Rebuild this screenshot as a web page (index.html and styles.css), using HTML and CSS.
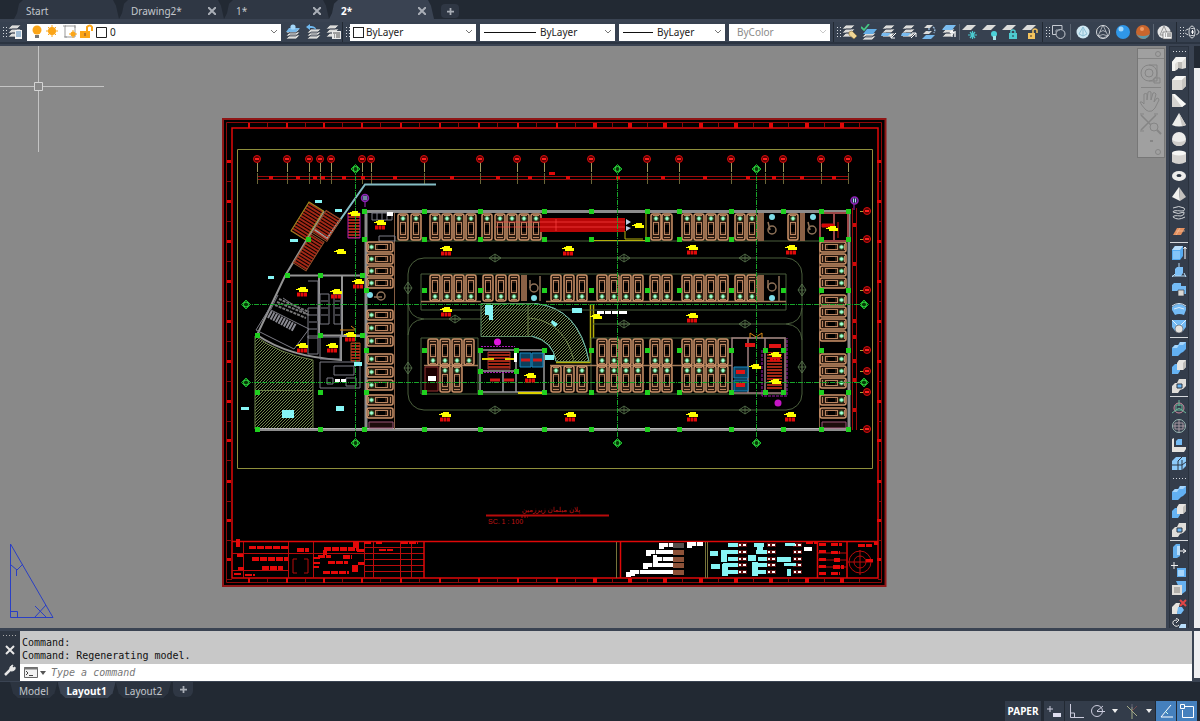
FILE: index.html
```
<!DOCTYPE html>
<html lang="en">

<head>
	<meta charset="utf-8">
	<meta name="viewport" content="width=device-width, initial-scale=1">
	<title>2* - Layout1</title>
	<link rel="stylesheet" href="styles.css">
</head>

<body>

	<!-- icon sprite -->
	<svg class="sprite" aria-hidden="true">
		<symbol id="i-sheets" viewBox="0 0 16 16">
			<path d="M5 1h9l-4 4H1zM5 5h9l-4 4H1zM5 9h9l-4 4H1z" fill="#dcdcda" stroke="#343d4b" stroke-width=".7"/>
		</symbol>
		<symbol id="i-props" viewBox="0 0 16 16">
			<use href="#i-sheets"/>
			<path d="M8 6h7v9H8z" fill="#f2f2f2"/><path d="M9 8h5M9 10h5M9 12h5" stroke="#4a83b5"/>
		</symbol>
		<symbol id="i-current" viewBox="0 0 16 16">
			<path d="M5 5h10l-4 4H1zM5 8h10l-4 4H1zM5 11h10l-4 4H1z" fill="#dcdcda" stroke="#343d4b" stroke-width=".7"/>
			<path d="M4 4h11l-4 4H1z" fill="#78b9ea"/><circle cx="8" cy="3" r="2.6" fill="#a5d8fa"/>
		</symbol>
		<symbol id="i-prev" viewBox="0 0 16 16">
			<path d="M6 5h10l-4 4H2zM6 8h10l-4 4H2zM6 11h10l-4 4H2z" fill="#dcdcda" stroke="#343d4b" stroke-width=".7"/>
			<path d="M1 3l4-3v2c4 0 6 1 6 4-2-2-3-2-6-2v2z" fill="#6fb9f0"/>
		</symbol>
		<symbol id="i-state" viewBox="0 0 16 16">
			<use href="#i-sheets"/>
			<path d="M7 7h9v8H7z" fill="#e9e9e9"/><path d="M8 9h7M9 11h1M11 11h4M9 13h1M11 13h4" stroke="#555"/>
		</symbol>
		<symbol id="i-match" viewBox="0 0 16 16">
			<use href="#i-sheets"/><path d="M8 8l3-1 5 5-3 3-5-4z" fill="#f0d695" stroke="#8a713a" stroke-width=".6"/>
		</symbol>
		<symbol id="i-check" viewBox="0 0 16 16">
			<path d="M5 9h10l-4 4H1zM5 12h10l-4 4H1z" fill="#dcdcda" stroke="#343d4b" stroke-width=".7"/>
			<path d="M6 5h10l-4 5H2z" fill="#64aee6"/><path d="M0 3l3 3 5-6" fill="none" stroke="#46c784" stroke-width="1.8"/>
		</symbol>
		<symbol id="i-copylay" viewBox="0 0 16 16">
			<use href="#i-sheets"/><path d="M1 9h9l-3 3H0z" fill="#79bcf0"/><path d="M15 9l-5 5m0-4v4h4" fill="none" stroke="#fff"/>
		</symbol>
		<symbol id="i-isolate" viewBox="0 0 16 16">
			<use href="#i-sheets"/><path d="M1 9h9l-3 3H0z" fill="#79bcf0"/><path d="M10 14l5-5m-4 0h4v4" fill="none" stroke="#fff"/>
		</symbol>
		<symbol id="i-walk" viewBox="0 0 16 16">
			<path d="M6 1h6l-3 3H3zM5 7h6l-3 3H2z" fill="#dcdcda"/><path d="M5 11h9l-4 4H1z" fill="#75b7eb"/>
			<path d="M12 3q3 2 1 6M8 4v4" fill="none" stroke="#9bd" stroke-width="1.4" stroke-dasharray="2 1"/>
		</symbol>
		<symbol id="i-merge" viewBox="0 0 16 16">
			<use href="#i-sheets"/><path d="M5 1h10l-4 5H1z" fill="#79bcf0"/><path d="M11 13V7m-2 2l2-2 2 2M14 7v6" fill="none" stroke="#fff" stroke-width="1.3"/>
		</symbol>
		<symbol id="i-freeze" viewBox="0 0 16 16">
			<path d="M5 1h9l-5 5H0z" fill="#dcdcda"/><path d="M6 11h9M8 8l5 6M13 8l-5 6M10.500 7v8" stroke="#4bc9cf" stroke-width="1.200"/>
		</symbol>
		<symbol id="i-off" viewBox="0 0 16 16">
			<path d="M5 1h9l-5 5H0z" fill="#dcdcda"/><circle cx="12" cy="10" r="3" fill="#4bd2d8"/><path d="M11 12h3v4h-3z" fill="#a8e4e6"/>
		</symbol>
		<symbol id="i-lock" viewBox="0 0 16 16">
			<path d="M5 1h9l-5 5H0z" fill="#dcdcda"/><path d="M7 9h8v6H7z" fill="#4ecad0"/><path d="M9 9V7q2-2 4 0v2" fill="none" stroke="#4ecad0" stroke-width="1.500"/><path d="M11 11v2" stroke="#234"/>
		</symbol>
		<symbol id="i-unlock" viewBox="0 0 16 16">
			<path d="M5 1h9l-5 5H0z" fill="#dcdcda"/><path d="M6 9h7v6H6z" fill="#f3c35e"/><path d="M11 9V6q2-2 4 0v3" fill="none" stroke="#f3c35e" stroke-width="1.500"/><path d="M9 11v2" stroke="#432"/>
		</symbol>
		<symbol id="i-wire2d" viewBox="0 0 16 16">
			<path d="M12 5V1.500H2.500v9H6" fill="none" stroke="#c6cbd2"/><circle cx="10.500" cy="10" r="4.500" fill="none" stroke="#c6cbd2"/><path d="M6 8V6h4" fill="none" stroke="#98a0ab"/>
		</symbol>
		<symbol id="i-hidden" viewBox="0 0 16 16">
			<circle cx="8" cy="8" r="6.500" fill="#cfe8f3"/><path d="M8 3l-4 7 4 2 4-2zM8 3v9" fill="none" stroke="#8cbed3"/>
		</symbol>
		<symbol id="i-wire" viewBox="0 0 16 16">
			<circle cx="8" cy="8" r="6.500" fill="none" stroke="#d5d8dc"/><path d="M8 1L3 12l5 2 5-2L8 1zM5 8q3-3 6 0M3 12q5-3 10 0" fill="none" stroke="#d5d8dc" stroke-width=".7"/>
		</symbol>
		<symbol id="i-blue" viewBox="0 0 16 16">
			<circle cx="8" cy="8" r="7" fill="#2f97e8"/><circle cx="6" cy="5" r="2.500" fill="#9fd6fb"/>
		</symbol>
		<symbol id="i-real" viewBox="0 0 16 16">
			<circle cx="8" cy="8" r="7" fill="#c9662d"/><path d="M1 9q2 5 7 6 5 0 7-6-1 3-7 3T1 9z" fill="#5d98a8"/><circle cx="7" cy="5" r="2" fill="#ef9a62"/>
		</symbol>
		<symbol id="i-vsman" viewBox="0 0 16 16">
			<circle cx="8" cy="8" r="6.500" fill="#e6e6e6"/><path d="M8 2L4 11h8z" fill="none" stroke="#999"/><path d="M7 8h9v7H7z" fill="#f5f5f5" stroke="#555" stroke-width=".6"/><path d="M9 10h1M11 10h4M9 12h1M11 12h4" stroke="#666"/>
		</symbol>
		<symbol id="i-orbit" viewBox="0 0 16 16">
			<ellipse cx="8" cy="8" rx="7" ry="3.500" fill="none" stroke="#d5d8dc" stroke-dasharray="4 2"/><ellipse cx="8" cy="8" rx="3" ry="6" fill="none" stroke="#d5d8dc"/><path d="M7 8h3M8.500 6v4" stroke="#fff"/>
		</symbol>

		<!-- solids -->
		<symbol id="s-poly" viewBox="0 0 16 16"><path d="M1 6l4-5h10v11l-4 1V6L7 7v6l-3 2H1z" fill="#dedcd8"/><path d="M7 6h4v7l-4-1z" fill="#bcbab6"/><path d="M1 6l4-5h10l-4 5-5 0-2 2v7H1z" fill="#f4f4f2"/></symbol>
		<symbol id="s-box" viewBox="0 0 16 16"><path d="M1 5l4-4h10v10l-4 4H1z" fill="#dcdad6"/><path d="M1 5l4-4h10l-4 4z" fill="#f7f7f5"/><path d="M11 5l4-4v10l-4 4z" fill="#c8c6c2"/></symbol>
		<symbol id="s-wedge" viewBox="0 0 16 16"><path d="M1 1v13h10l4-3z" fill="#d5d3d0"/><path d="M1 1l3 0 11 10-4 3z" fill="#f8f8f6"/></symbol>
		<symbol id="s-cone" viewBox="0 0 16 16"><path d="M8 1L1 13q7 3 14 0z" fill="#ededeb"/><path d="M8 1l3 13q3 0 4-1z" fill="#c9c7c4"/></symbol>
		<symbol id="s-sphere" viewBox="0 0 16 16"><circle cx="8" cy="8" r="7" fill="#ededeb"/><path d="M1 9q7 4 14 0-1 6-7 6T1 9z" fill="#cfcdca"/></symbol>
		<symbol id="s-cyl" viewBox="0 0 16 16"><path d="M1 4v9q7 4 14 0V4z" fill="#d5d3d0"/><ellipse cx="8" cy="4" rx="7" ry="2.500" fill="#f7f7f5"/></symbol>
		<symbol id="s-torus" viewBox="0 0 16 16"><ellipse cx="8" cy="8" rx="7" ry="5" fill="#ededeb"/><ellipse cx="8" cy="7.500" rx="2.500" ry="1.500" fill="#2c3542"/></symbol>
		<symbol id="s-pyr" viewBox="0 0 16 16"><path d="M8 1L1 11l8 4z" fill="#f2f2f0"/><path d="M8 1l1 14 6-4z" fill="#c3c1be"/></symbol>
		<symbol id="s-helix" viewBox="0 0 16 16"><path d="M2 3q6-3 11 0 2 3-3 3-8-1-8 1 5 3 11 0 1 3-3 4-8-1-8 1 5 4 12 0" fill="none" stroke="#d0d3d6"/></symbol>
		<symbol id="s-plane" viewBox="0 0 16 16"><path d="M6 5h8l-4 7H2z" fill="#e3905f"/><path d="M5 8h9M9 5l-4 7" stroke="#f6c09b" stroke-width=".7"/></symbol>
		<symbol id="s-bluebox" viewBox="0 0 16 16"><path d="M1 5l3-4h8v10l-3 4H1z" fill="#56aaf0"/><path d="M1 5l3-4h8L9 5z" fill="#b9defb"/><path d="M2 6h7v8H2z" fill="#84c4f8"/><path d="M14 14V2m-1.500 2L14 2l1.500 2" fill="none" stroke="#fff"/></symbol>
		<symbol id="s-press" viewBox="0 0 16 16"><path d="M4 6l2-2h6v6l-2 3H4z" fill="#7dc0f7"/><path d="M1 13h14M8 0v4M1 14l3-3M15 14l-2-4" stroke="#b7dcf7"/></symbol>
		<symbol id="s-pull" viewBox="0 0 16 16"><path d="M1 3l2-2h7v3h5v8H8V9H1z" fill="#74bbf5"/><path d="M7 8h6v6H7z" fill="#d9d7d3" stroke="#333d4b" stroke-width=".7"/></symbol>
		<symbol id="s-sweep" viewBox="0 0 16 16"><path d="M1 6q7-6 14 0v3l-2 5q-5-2-9 0L1 9z" fill="#74bbf5"/><path d="M1 5q7-5 14 0M3 8q5-3 10 0" fill="none" stroke="#d8ecfb"/></symbol>
		<symbol id="s-revolve" viewBox="0 0 16 16"><path d="M1 1h14v7l-3 4H4L1 8z" fill="#74bbf5"/><path d="M1 1l5 5M15 1l-5 5" stroke="#e1f1fd"/><circle cx="8" cy="10" r="4" fill="#e5e3df" stroke="#4a5360" stroke-width=".6"/></symbol>
		<symbol id="s-union" viewBox="0 0 16 16"><path d="M1 7l3-3h3l2-3h6v7l-3 3-2 1-3 3H1z" fill="#62b0f2"/><path d="M1 7l3-3h4l1-3h6l-3 3H8L6 7z" fill="#a5d5fb"/></symbol>
		<symbol id="s-subtract" viewBox="0 0 16 16"><path d="M1 8l3-3h5v7l-2 3H1z" fill="#66b3f3"/><path d="M6 4l2-3h7v7l-3 3H6z" fill="#e6e4e0"/><path d="M12 4l3-3v7l-3 3z" fill="#bfbdb9"/></symbol>
		<symbol id="s-intersect" viewBox="0 0 16 16"><path d="M1 8l3-3h2l2-4h7v7l-3 3-3 1-2 3H1z" fill="#dfddd9"/><path d="M6 6h5v4H6z" fill="#69b5f4" stroke="#2d3643"/></symbol>
		<symbol id="s-gizmo" viewBox="0 0 16 16"><circle cx="8" cy="9" r="5" fill="none" stroke="#cf8aa0"/><path d="M8 1v6M8 9l-7 5M8 9l7 5M5 6h6v5H5z" fill="none" stroke="#69b99b"/></symbol>
		<symbol id="s-globe" viewBox="0 0 16 16"><circle cx="8" cy="8" r="6.500" fill="none" stroke="#9db9b4"/><path d="M2 8h12M8 2v12M4 5h8v6H4z" fill="none" stroke="#a89aa3"/></symbol>
		<symbol id="s-angle" viewBox="0 0 16 16"><path d="M1 2l2-1v9h12v2l-2 3H1z" fill="#e5e3df"/><path d="M5 4l2-2h4v6H5z" fill="#74bbf5"/></symbol>
		<symbol id="s-slice" viewBox="0 0 16 16"><path d="M1 6l4-4h10v9l-4 4H1z" fill="#8ccaf9"/><path d="M7 15V6l4-4M1 10h10l4-3M11 5v10" fill="none" stroke="#2d3643"/></symbol>
		<symbol id="s-extface" viewBox="0 0 16 16"><path d="M2 4l3-3h4v12l-3 2H2z" fill="#65b0ef"/><path d="M6 3h3v9H6z" fill="#b9defb"/><path d="M9 8h5m-2-2l3 2-3 2" fill="none" stroke="#fff"/></symbol>
		<symbol id="s-moveface" viewBox="0 0 16 16"><path d="M6 6h9v9H6z" fill="#62b0f2"/><path d="M7 8h6v6H7z" fill="#a5d5fb"/><path d="M3 0v7M0 3.500h7" stroke="#eee"/></symbol>
		<symbol id="s-offface" viewBox="0 0 16 16"><path d="M5 1h10v10l-4 3" fill="#65b0ef"/><path d="M1 5h10v10H1z" fill="#dfddd9"/><path d="M3 7h6v6H3z" fill="#b0aeaa"/></symbol>
		<symbol id="s-delface" viewBox="0 0 16 16"><path d="M1 8l4-4h4l-3 11H1z" fill="#e6e4e0"/><path d="M7 8l4 0 2 3-3 4H6z" fill="#74bbf5"/><path d="M9 1l6 6M15 1L9 7" stroke="#e14646" stroke-width="2"/></symbol>
		<symbol id="s-rotface" viewBox="0 0 16 16"><path d="M6 2q-5 0-4 4 3 4 6 1M5 0l3 2-3 3" fill="none" stroke="#e8e8e8"/><path d="M8 9l2-3h5v8H8z" fill="#b9defb"/></symbol>
	</svg>

	<nav class="file-tabs">
		<a href="#" class="file-tab">Start</a>
		<a href="#" class="file-tab">Drawing2*<svg class="close" viewBox="0 0 8 8"><path d="M0 0l8 8M8 0L0 8"/></svg></a>
		<a href="#" class="file-tab">1*<svg class="close" viewBox="0 0 8 8"><path d="M0 0l8 8M8 0L0 8"/></svg></a>
		<a href="#" class="file-tab active">2*<svg class="close" viewBox="0 0 8 8"><path d="M0 0l8 8M8 0L0 8"/></svg></a>
		<button type="button" class="add-tab" aria-label="New drawing"><svg viewBox="0 0 8 8"><path d="M4 0v8M0 4h8"/></svg></button>
	</nav>

	<div class="toolbar">
		<div class="tool-group layers">
			<span class="grip"></span>
			<button type="button" class="tool" aria-label="Layer properties"><svg><use href="#i-props"/></svg></button>
			<div class="combo combo-layer">
				<svg class="layer-flags" viewBox="0 0 80 16">
					<circle cx="7" cy="6" r="4.500" fill="#fba518"/><path d="M5 11h4v3H5z" fill="#777"/>
					<circle cx="22" cy="7" r="4" fill="#fba518"/><path d="M22 1v12M16 7h12M18 3l8 8M26 3l-8 8" stroke="#fba518"/>
					<path d="M35 2h10v11H35zM33 2h3M45 1v3M34 13h3" fill="none" stroke="#999"/><circle cx="43" cy="10" r="2.500" fill="#fba518"/><path d="M43 6v8M39 10h8" stroke="#fba518"/>
					<path d="M50 7h10v7H50z" fill="#fba518"/><path d="M57 7V3q3-3 5 0v4" fill="none" stroke="#fba518" stroke-width="2"/><path d="M55 9v3" stroke="#743"/>
					<path d="M66.500 3.500h10v10h-10z" fill="#fff" stroke="#222"/>
				</svg>
				<select aria-label="Layer"><option>0</option></select>
				<svg class="chevron" viewBox="0 0 8 6"><path d="M1 1l3 3 3-3"/></svg>
			</div>
			<button type="button" class="tool" aria-label="Make current"><svg><use href="#i-current"/></svg></button>
			<button type="button" class="tool" aria-label="Layer previous"><svg><use href="#i-prev"/></svg></button>
			<button type="button" class="tool" aria-label="Layer states"><svg><use href="#i-state"/></svg></button>
		</div>
		<div class="tool-group properties">
			<span class="grip"></span>
			<div class="combo combo-color">
				<span class="swatch"></span>
				<select aria-label="Color"><option>ByLayer</option></select>
				<svg class="chevron" viewBox="0 0 8 6"><path d="M1 1l3 3 3-3"/></svg>
			</div>
			<div class="combo combo-linetype">
				<span class="line"></span>
				<select aria-label="Linetype"><option>ByLayer</option></select>
				<svg class="chevron" viewBox="0 0 8 6"><path d="M1 1l3 3 3-3"/></svg>
			</div>
			<div class="combo combo-weight">
				<span class="line"></span>
				<select aria-label="Lineweight"><option>ByLayer</option></select>
				<svg class="chevron" viewBox="0 0 8 6"><path d="M1 1l3 3 3-3"/></svg>
			</div>
			<div class="combo combo-plot">
				<select aria-label="Plot style" disabled><option>ByColor</option></select>
				<svg class="chevron" viewBox="0 0 8 6"><path d="M1 1l3 3 3-3"/></svg>
			</div>
		</div>
		<div class="tool-group">
			<span class="grip"></span>
			<button type="button" class="tool" aria-label="Layer match"><svg><use href="#i-match"/></svg></button>
			<button type="button" class="tool" aria-label="Change to current"><svg><use href="#i-check"/></svg></button>
			<button type="button" class="tool" aria-label="Copy to layer"><svg><use href="#i-copylay"/></svg></button>
			<button type="button" class="tool" aria-label="Isolate"><svg><use href="#i-isolate"/></svg></button>
			<button type="button" class="tool" aria-label="Layer walk"><svg><use href="#i-walk"/></svg></button>
			<button type="button" class="tool" aria-label="Merge"><svg><use href="#i-merge"/></svg></button>
			<span class="divider tight"></span>
			<button type="button" class="tool" aria-label="Freeze"><svg><use href="#i-freeze"/></svg></button>
			<button type="button" class="tool" aria-label="Off"><svg><use href="#i-off"/></svg></button>
			<button type="button" class="tool" aria-label="Lock"><svg><use href="#i-lock"/></svg></button>
			<button type="button" class="tool" aria-label="Unlock"><svg><use href="#i-unlock"/></svg></button>
		</div>
		<div class="tool-group">
			<span class="grip"></span>
			<button type="button" class="tool" aria-label="2D wireframe"><svg><use href="#i-wire2d"/></svg></button>
			<span class="divider"></span>
			<button type="button" class="tool" aria-label="Hidden"><svg><use href="#i-hidden"/></svg></button>
			<button type="button" class="tool" aria-label="Wireframe"><svg><use href="#i-wire"/></svg></button>
			<button type="button" class="tool" aria-label="Conceptual"><svg><use href="#i-blue"/></svg></button>
			<button type="button" class="tool" aria-label="Realistic"><svg><use href="#i-real"/></svg></button>
			<span class="divider tight"></span>
			<button type="button" class="tool" aria-label="Visual styles"><svg><use href="#i-vsman"/></svg></button>
		</div>
		<div class="tool-group">
			<span class="grip"></span>
			<button type="button" class="tool" aria-label="Orbit"><svg><use href="#i-orbit"/></svg></button>
		</div>
	</div>

	<main class="workspace">
		<div class="canvas">
			<svg class="crosshair" viewBox="0 0 104 106">
				<path d="M38.500 0v36M38.500 45v61M0 40.500h34M43 40.500h61" stroke="#c4c4c4"/>
				<path d="M34.500 36.500h8v8h-8z" fill="none" stroke="#d4d4d4"/>
			</svg>
			<svg class="sheet" id="sheet" viewBox="222 118 665 470">
				<defs>
					<pattern id="hatch" width="3" height="3" patternUnits="userSpaceOnUse">
						<path d="M-1 1l2-2M0 3l3-3M2 4l2-2" stroke="#7c9552" stroke-width=".9"/>
					</pattern>
					<pattern id="treads" width="3" height="3" patternUnits="userSpaceOnUse">
						<path d="M0 1h3" stroke="#d9341c" stroke-width="1.500"/>
					</pattern>
					<g id="car">
						<rect x="-5" y="-13" width="10" height="26" rx="2" fill="#2a1a10" stroke="#cb936a" stroke-width="1.500"/>
						<path d="M-3-4.500h6M-3 7.500h6M-3-11.500h6M-2.500-4v12M2.500-4v12M-3 10.500h6" fill="none" stroke="#b98460"/>
						<path d="M-2-2h4v7h-4z" fill="#000"/>
						<circle cy="-8.500" r="2" fill="#a8ffdc" stroke="#4c9a58"/>
					</g>
					<g id="bubble">
						<circle r="3.500" fill="#5c0000" stroke="#d80d0d"/><path d="M-2 0h4" stroke="#ff2020" stroke-width="2"/>
					</g>
					<g id="axis">
						<path d="M0-4.500L4.500 0 0 4.500-4.500 0z" fill="#053805" stroke="#19b82a"/><circle r="2.500" fill="none" stroke="#35e048"/>
					</g>
					<g id="flow">
						<path d="M-6 0L0-4 6 0 0 4zM0-4v8M-6 0H6" fill="none" stroke="#55704b" stroke-width=".9"/>
					</g>
					<g id="tag">
						<path d="M-6-1h2v-1h2v-1h6v2h2v3h-9v-2h-3z" fill="#ffff00"/>
					</g>
					<g id="tag-red">
						<use href="#tag"/><path d="M-5 4.500H5" stroke="#e30b0b" stroke-width="4" stroke-dasharray="3 .5"/>
					</g>
				</defs>

				<!-- paper and frame -->
				<rect x="223" y="119" width="662.500" height="467" fill="#000" stroke="#8f1717" stroke-width="2"/>
				<path d="M226.500 122.500h655v460h-655z" fill="none" stroke="#8d0808"/>
				<path d="M232 128h646v450H232zM232 541.500h646" fill="none" stroke="#e00808" stroke-width="1.500"/>
				<path d="M237.500 149.500h635v319h-635z" fill="none" stroke="#8f8f3c"/>
				<g id="frame-ticks"></g>

				<!-- grid -->
				<path d="M257 176.500h592M257 179.500h592M852.500 208v222M856.500 208v222" stroke="#9c0b0b"/>
				<g id="grid"></g>

				<!-- ground slab and ramps -->
				<path d="M255 336q25 18 58 24v69h-58z" fill="url(#hatch)" stroke="#6c8048"/>
				<path d="M255 390.500h58" stroke="#6c8048"/>
				<path d="M481 303.500h54q44 4 54 58h-33q-3-20-24-25h-51z" fill="url(#hatch)" stroke="#5d8a62"/>
				<path d="M528 304v32M528 318q36 2 46 43" fill="none" stroke="#6c8048"/>
				<path d="M535 303.500q44 4 54 58M532 336q21 5 24 25" fill="none" stroke="#6fb9ae"/>
				<path d="M590.500 304v59M556 362.500h34M593.500 304v34" stroke="#b5b00c" stroke-width="1.500" fill="none"/>

				<!-- driveway -->
				<g fill="none" stroke="#4b5f3d">
					<rect x="408" y="258" width="394" height="152" rx="16"/>
					<path d="M408 303q1 15 16 16h57M408 335q1-15 16-16M593 324h193q15-1 16-16M786 324q15 1 16 16"/>
					<path d="M421 274h365v36H421zM394 241h426M421 338h57v56h-57zM591 338h195v56H591zM478 394h113"/>
				</g>
				<path d="M421 301.500h60M546 301.500h240M424 365.500h54M550 365.500h182" stroke="#a47b59" stroke-width="1.500"/>

				<!-- outer walls -->
				<path d="M364 211.500h485v218H257M366 211v218" fill="none" stroke="#8c8c8c" stroke-width="3"/>
				<path d="M257 428.500h592" stroke="#b5b5b5"/>
				<path d="M324 211l-39 65-28 59q32 22 84 25v-24M285 275.500h80M319 276v60M342 276v60M319 335.500h45M341 336h24" fill="none" stroke="#949494" stroke-width="2"/>
				<path d="M394.500 213v216M819.500 213v216" stroke="#855d42"/>
				<path d="M436 184.500h-71l-38 54-14-10" fill="none" stroke="#84bcc4" stroke-width="2"/>

				<!-- stairs on the slanted side -->
				<g transform="translate(309 202) rotate(32)">
					<path d="M0 0h17v34H0z" fill="url(#treads)" stroke="#a08c20"/>
					<path d="M19-2h17v26H19z" fill="url(#treads)" stroke="#94502c"/>
					<path d="M19 26h15v34H19z" fill="url(#treads)" stroke="#94502c"/>
				</g>
				<path d="M348 213h12v25h-12z" fill="url(#treads)" stroke="#b01fb0"/>
				<path d="M351 343h9v18h-9z" fill="url(#treads)" stroke="#a04d20"/>

				<!-- plant rooms -->
				<g fill="none" stroke="#7d7d86">
					<path d="M269 309l40 20-15 20-38-19zM283 298l24 16M308 281h10v40M278 295l-7 14"/>
					<path d="M320 362h40v26h-40zM334 366h20v9h-20zM327 378h6v6h-6zM346 378h10v8h-10z"/>
					<path d="M308 308h10v30h-10zM320 294h9v30h-9zM334 294h7v30h-7zM308 336h10v18h-10zM320 337h20v22h-20zM309 315h8M309 322h8M309 329h8M321 301h7M321 308h7M321 315h7M335 301h5M335 308h5M335 315h5"/>
					<path d="M372 213h20v7h-20zM377 213v7M382 213v7M387 213v7M379 236h16v5h-16z"/>
				</g>
				<path d="M277 302l32 13M275 305l31 13M279 299l30 13" stroke="#777" stroke-width="2" stroke-dasharray="3 1"/>
				<path d="M269 314l26 14" stroke="#8b8b93" stroke-width="8" stroke-dasharray="2 1"/>

				<g id="cars"></g>

				<!-- red ramp -->
				<path d="M540 218h85v14h-85z" fill="#b90707"/>
				<path d="M496 222h129M496 227h129M556 219v12" stroke="#ff4545" stroke-width=".7"/>
				<path d="M625 231v8h18M594 240.500h52v-28" fill="none" stroke="#b5b00c"/>
				<path d="M626 219l5 3-5 3zM626 226l5 2-5 3z" fill="#bcd"/>

				<!-- accessible bays -->
				<g fill="#8b6146">
					<path d="M758 213h6v28h-6zM800 213h5v28h-5zM758 275h6v26h-6zM521 275h6v26h-6z"/>
				</g>
				<g fill="none" stroke="#8f7258" stroke-width="1.500">
					<circle cx="772" cy="230" r="4"/><circle cx="812" cy="230" r="4"/><circle cx="772" cy="287" r="4"/><circle cx="534" cy="288" r="4"/><circle cx="381" cy="296" r="4"/>
					<path d="M768 222l2 8M808 222l2 8M768 280v8M530 280v8M374 297h8M540 276v25M779 276v25"/>
				</g>
				<g fill="#7edce8">
					<circle cx="772" cy="217" r="3"/><circle cx="813" cy="217" r="3"/><circle cx="772" cy="298" r="3"/><circle cx="534" cy="298" r="3"/><circle cx="370" cy="295" r="3"/>
				</g>

				<!-- cores -->
				<path d="M480 350h64v42h-64zM480 371h38M503 371v21M516 350v42M480 348v44" fill="none" stroke="#9a9a9a" stroke-width="1.500"/>
				<path d="M488 352h22v17h-22z" fill="url(#treads)" stroke="#933"/>
				<path d="M520 353h11v14h-11zM532 353h11v14h-11z" fill="#0b405d" stroke="#1a8ac4"/>
				<path d="M521 360h9M533 360h9M490 380h10M504 380h10" stroke="#d11a1a" stroke-width="3"/>
				<path d="M482 359h12M505 359h10M518 393h26" stroke="#ddd000" stroke-width="2"/>
				<path d="M481 346.500h34M481 372.500h38" stroke="#a31cb0" stroke-dasharray="2 1"/>
				<path d="M514 352h3v10h-3z" fill="#fff"/>
				<path d="M425 367h13v24h-13z" fill="#1b0000" stroke="#963232"/><path d="M428 376h8v5h-8z" fill="#fff"/>
				<path d="M732 338h53v55h-53zM748 338v55M765 338v55" fill="none" stroke="#a08080" stroke-width="1.500"/>
				<path d="M734 367h14v11h-14zM734 380h14v11h-14z" fill="#0b405d" stroke="#1a8ac4"/>
				<path d="M736 372h9M736 385h9M745 345h10M769 346h12" stroke="#e01414" stroke-width="4"/>
				<path d="M767 352h15v38h-15z" fill="url(#treads)"/>
				<path d="M762 350v46h25v-58" fill="none" stroke="#a31cb0" stroke-dasharray="3 1"/>
				<path d="M750 338v-5l6 4 6-4v5M340 330h16l-5-4" fill="none" stroke="#d98a18"/>
				<path d="M820 213h28v28h-28zM834 213v28" fill="none" stroke="#9a4747" stroke-width="2"/>
				<path d="M822 224h12v3h-12zM838 222v16" fill="#d00" stroke="#c11"/>
				<path d="M369 422h24v6h-24zM822 422h24v6h-24z" fill="#1c0c0c" stroke="#957"/>

				<g id="columns"></g>

				<g stroke="#17a52a" stroke-dasharray="5 1 1 1">
					<path d="M355.500 168v275M617.500 168v275M756.500 168v275M246 304.500h618M246 382.500h618"/>
				</g>
				<g id="labels"></g>

				<path d="M365 202v5M854 204v6" stroke="#a226c0"/>
				<circle cx="365" cy="198" r="3.500" fill="#234" stroke="#8f22b8" stroke-width="1.500"/>
				<circle cx="854.500" cy="200.500" r="3.500" fill="#234" stroke="#8f22b8" stroke-width="1.500"/>
				<path d="M364 196v4M366 196v4M853.500 198.500v4M855.500 198.500v4" stroke="#bcd9ff"/>
				<circle cx="497.500" cy="342" r="3.500" fill="#e015e0"/><circle cx="778" cy="403" r="3.500" fill="#c515c5"/>
				<path d="M485 305h8v15h-4v-5h-4zM282 410h12v8h-12zM572 308h10v5h-10zM545 355h9v5h-9zM315 200h7v3h-7zM335 209h7v3h-7zM290 239h8v3h-8zM268 276h6v3h-6zM354 362h8v4h-8zM336 406h8v5h-8zM241 407h8v3h-8zM552 320l6 4-3 3-4-4z" fill="#86f5f5"/>
				<path d="M597 311h7v3h-7zM605 311h6v3h-6zM612 311h6v3h-6zM619 311h8v3h-8zM335 379h5v3h-5zM341 379h5v3h-5zM387 212h6v4h-6z" fill="#fff"/>

				<!-- drawing title -->
				<text class="cad-text" x="551" y="512" text-anchor="middle">پلان مبلمان زیرزمین</text>
				<path d="M486 515.500h123" stroke="#b80b0b" stroke-width="2"/>
				<text class="cad-text" x="488" y="524">SC. 1 : 100</text>
				<path d="M521 517h7" stroke="#b80b0b" stroke-dasharray="2 1"/>

				<!-- title block -->
				<g fill="none" stroke="#b90b0b">
					<path d="M243.500 542v36M288.500 542v36M313.500 542v36M364.500 542v36M373.500 542v36M400.500 542v36M411.500 542v36M232 553.500h132M232 570.500h56M364 547.500h60M364 553.500h60M364 559.500h60M364 565.500h60M364 571.500h60"/>
					<path d="M424 542v36M620.500 542v36M817.500 542v36M847 542v36" stroke="#e00808" stroke-width="1.500"/>
					<path d="M297 559h-4v14h4M304 559h4v14h-4"/>
					<circle cx="860" cy="562" r="11"/><circle cx="860" cy="562" r="6"/><path d="M848 562h25M860 550v25M817 553h30M817 560h30M817 567h30"/>
				</g>
				<path d="M616.500 542v36M705.500 542v36M707.500 542v36" stroke="#77733a"/>
				<g id="title-block"></g>
			</svg>

			<svg class="ucs" viewBox="0 0 44 76" fill="none" stroke="#2a3fc4">
				<path d="M.5 1v73.500H43zM.5 68.500h7v6M1 22l6 5 6-6M6.500 27v6M25 63l11 11M25 74l11-12"/>
			</svg>

			<div class="navbar">
				<svg viewBox="0 0 26 108" fill="none" stroke="#858585">
					<circle cx="20" cy="5" r="2.500"/><path d="M0 9.500h26"/>
					<circle cx="11" cy="24" r="8"/><circle cx="11" cy="24" r="4"/><path d="M11 16h8v16h-8M16 29h6v5h-6z"/>
					<path d="M3 38.500h20"/>
					<path d="M8 61c-3-3-5-6-6-8q2-1 4 2V45q2-1 3 0v6l1-8q2-1 3 0v8l2-7q2-1 3 1l-2 8 3-4q2 0 2 2l-4 8-3 3q-4 1-6-1z"/>
					<path d="M3 66l15 15M18 66L3 81" stroke-width="1.500"/><path d="M2 65h4M16 65h4M2 82h4"/><circle cx="16" cy="78" r="4" fill="#a0a0a0"/><path d="M19 81l4 4" stroke-width="2"/>
					<path d="M12 92h3" stroke-width="2"/><circle cx="20" cy="103" r="2.500"/>
				</svg>
			</div>
		</div>

		<div class="solids">
			<div class="solids-list">
				<span class="grip-h"></span>
				<button type="button" class="solid" aria-label="Polysolid"><svg><use href="#s-poly"/></svg></button>
				<button type="button" class="solid" aria-label="Box"><svg><use href="#s-box"/></svg></button>
				<button type="button" class="solid" aria-label="Wedge"><svg><use href="#s-wedge"/></svg></button>
				<button type="button" class="solid" aria-label="Cone"><svg><use href="#s-cone"/></svg></button>
				<button type="button" class="solid" aria-label="Sphere"><svg><use href="#s-sphere"/></svg></button>
				<button type="button" class="solid" aria-label="Cylinder"><svg><use href="#s-cyl"/></svg></button>
				<button type="button" class="solid" aria-label="Torus"><svg><use href="#s-torus"/></svg></button>
				<button type="button" class="solid" aria-label="Pyramid"><svg><use href="#s-pyr"/></svg></button>
				<button type="button" class="solid" aria-label="Helix"><svg><use href="#s-helix"/></svg></button>
				<button type="button" class="solid" aria-label="Planar surface"><svg><use href="#s-plane"/></svg></button>
				<span class="rule"></span>
				<button type="button" class="solid" aria-label="Extrude"><svg><use href="#s-bluebox"/></svg></button>
				<button type="button" class="solid" aria-label="Presspull"><svg><use href="#s-press"/></svg></button>
				<button type="button" class="solid" aria-label="Sweep"><svg><use href="#s-pull"/></svg></button>
				<button type="button" class="solid" aria-label="Revolve"><svg><use href="#s-sweep"/></svg></button>
				<button type="button" class="solid" aria-label="Loft"><svg><use href="#s-revolve"/></svg></button>
				<span class="rule"></span>
				<button type="button" class="solid" aria-label="Union"><svg><use href="#s-union"/></svg></button>
				<button type="button" class="solid" aria-label="Subtract"><svg><use href="#s-subtract"/></svg></button>
				<button type="button" class="solid" aria-label="Intersect"><svg><use href="#s-intersect"/></svg></button>
				<span class="rule"></span>
				<button type="button" class="solid" aria-label="3D move"><svg><use href="#s-gizmo"/></svg></button>
				<button type="button" class="solid" aria-label="3D rotate"><svg><use href="#s-globe"/></svg></button>
				<button type="button" class="solid" aria-label="3D align"><svg><use href="#s-angle"/></svg></button>
				<button type="button" class="solid" aria-label="3D array"><svg><use href="#s-slice"/></svg></button>
				<span class="grip-h second"></span>
				<button type="button" class="solid" aria-label="Union"><svg><use href="#s-union"/></svg></button>
				<button type="button" class="solid" aria-label="Subtract"><svg><use href="#s-subtract"/></svg></button>
				<button type="button" class="solid" aria-label="Intersect"><svg><use href="#s-intersect"/></svg></button>
				<span class="rule"></span>
				<button type="button" class="solid" aria-label="Extrude faces"><svg><use href="#s-extface"/></svg></button>
				<button type="button" class="solid" aria-label="Move faces"><svg><use href="#s-moveface"/></svg></button>
				<button type="button" class="solid" aria-label="Offset faces"><svg><use href="#s-offface"/></svg></button>
				<button type="button" class="solid" aria-label="Delete faces"><svg><use href="#s-delface"/></svg></button>
				<button type="button" class="solid" aria-label="Rotate faces"><svg><use href="#s-rotface"/></svg></button>
			</div>
		</div>
		<div class="edge"></div>
	</main>

	<section class="command">
		<div class="command-side">
			<span class="dots"></span>
			<button type="button" aria-label="Close"><svg viewBox="0 0 12 12"><path d="M2 2l8 8M10 2l-8 8" stroke="#e8e8e8" stroke-width="2"/></svg></button>
			<button type="button" aria-label="Customize"><svg viewBox="0 0 12 12"><path d="M1 11l6-6" stroke="#e8e8e8" stroke-width="2.500"/><path d="M6 6q-1-4 3-5L8 3l1 1 2-1q1 4-4 4z" fill="#e8e8e8" stroke="#e8e8e8"/></svg></button>
		</div>
		<div class="command-body">
			<div class="history">
				<p>Command:</p>
				<p>Command: Regenerating model.</p>
			</div>
			<label class="prompt">
				<svg class="prompt-icon" viewBox="0 0 14 11"><path d="M.5.5h13v10H.5z" fill="#f1f1f1" stroke="#666"/><path d="M0 1.500h14" stroke="#777" stroke-width="2"/><path d="M2 4l2 2-2 2M5 8.500h4" fill="none" stroke="#444"/></svg>
				<svg class="prompt-caret" viewBox="0 0 6 4"><path d="M0 0h6L3 4z" fill="#555"/></svg>
				<input type="text" placeholder="Type a command" aria-label="Command">
			</label>
		</div>
		<div class="command-end"></div>
	</section>

	<nav class="layout-tabs">
		<a href="#" class="layout-tab">Model</a>
		<a href="#" class="layout-tab active">Layout1</a>
		<a href="#" class="layout-tab">Layout2</a>
		<button type="button" class="add-layout" aria-label="New layout"><svg viewBox="0 0 8 8"><path d="M4 0v8M0 4h8"/></svg></button>
	</nav>

	<footer class="status">
		<button type="button" class="space">PAPER</button>
		<button type="button" aria-label="Grid input"><svg viewBox="0 0 16 16"><path d="M4 3v6M1 6h6" stroke="#ccd"/><path d="M7 10h8v4H7z" fill="#dde"/></svg></button>
		<div class="status-group">
			<button type="button" aria-label="Ortho"><svg viewBox="0 0 16 16"><path d="M2.500 1v13.500H16M6.500 14v-4H2" fill="none" stroke="#ccd"/></svg></button>
			<button type="button" aria-label="Polar"><svg viewBox="0 0 16 16"><circle cx="7" cy="8" r="5.500" fill="none" stroke="#ccd"/><path d="M7 8.500h8M7 8l6-5" stroke="#ccd"/></svg></button>
			<button type="button" class="caret" aria-label="Polar options"><svg viewBox="0 0 6 4"><path d="M0 0h6L3 4z" fill="#eee"/></svg></button>
			<button type="button" aria-label="Isodraft"><svg viewBox="0 0 16 16"><path d="M3 3l10 10M8 4v12" stroke="#a5ac88"/><path d="M8 8l5-5" stroke="#754a4f"/><path d="M8 1v5" stroke="#667"/></svg></button>
			<button type="button" class="caret" aria-label="Isodraft options"><svg viewBox="0 0 6 4"><path d="M0 0h6L3 4z" fill="#eee"/></svg></button>
		</div>
		<button type="button" class="on" aria-label="Snap tracking"><svg viewBox="0 0 16 16"><path d="M13 2L3 14h12" fill="none" stroke="#fff"/><path d="M7 8l3 3" stroke="#cfe"/></svg></button>
		<button type="button" class="on" aria-label="Object snap"><svg viewBox="0 0 16 16"><path d="M6 3.500h8.500v11h-11V7" fill="none" stroke="#fff"/><path d="M1.500 1.500h4v4h-4z" fill="none" stroke="#fff"/></svg></button>
	</footer>

	<script src="plan.js"></script>

</body>
</html>
```
FILE: styles.css
```
* {
	box-sizing: border-box;
}

html,
body {
	height: 100%;
}

body {
	display: flex;
	flex-direction: column;
	margin: 0;
	overflow: hidden;
	background: #222933;
	color: #c3c7cd;
	font-family: "Noto Sans", "Open Sans", sans-serif;
	font-size: 11px;
}

button {
	margin: 0;
	padding: 0;
	border: 0;
	background: none;
	color: inherit;
	font: inherit;
}

a {
	color: inherit;
	text-decoration: none;
}

svg {
	display: block;
	flex: none;
}

.sprite {
	position: absolute;
	width: 0;
	height: 0;
}

/* file tabs */

.file-tabs {
	display: flex;
	flex: none;
	height: 22px;
	padding-left: 14px;
	border-bottom: 3px solid #3a4352;
}

.file-tab {
	display: flex;
	align-items: center;
	justify-content: space-between;
	width: 105px;
	height: 19px;
	padding: 3px 8px 0 12px;
	background: #2f3744;
	font-size: 10px;
	clip-path: polygon(0 100%, 3px 70%, 5px 20%, 9px 0, calc(100% - 6px) 0, calc(100% - 3px) 30%, 100% 100%);
}

.file-tab.active {
	background: #3a4352;
	color: #fff;
	font-weight: bold;
}

.close {
	width: 8px;
	height: 8px;
}

.close path,
.add-tab path,
.add-layout path {
	fill: none;
	stroke: #a9aeb6;
	stroke-width: 2;
}

.add-tab {
	display: flex;
	align-items: center;
	justify-content: center;
	width: 18px;
	height: 14px;
	margin: 4px 0 0 7px;
	border-radius: 4px;
	background: #2f3744;
}

.add-tab svg,
.add-layout svg {
	width: 7px;
	height: 7px;
}

/* toolbar */

.toolbar {
	display: flex;
	flex: none;
	height: 24px;
	padding-bottom: 2px;
	border-bottom: 2px solid #3a4352;
	background: #2b3441;
	overflow: hidden;
}

.tool-group {
	display: flex;
	flex: none;
	align-items: center;
	gap: 4px;
	padding: 0 4px 0 2px;
	border-right: 1px solid #222933;
	background: #374150;
}

.tool-group.layers {
	padding-right: 1px;
}

.grip {
	width: 5px;
	height: 12px;
	margin-right: -4px;
	background: radial-gradient(circle, #d5d9de 1px, transparent 1px) 0 0 / 3px 3px;
}

.tool {
	width: 16px;
	height: 16px;
}

.tool svg {
	width: 16px;
	height: 16px;
}

.divider {
	width: 1px;
	height: 16px;
	background: #5a6472;
}

.divider.tight {
	margin: 0 -2px;
}

.tool-group.properties {
	padding-right: 3px;
}

.combo {
	display: flex;
	align-items: center;
	height: 17px;
	padding: 0 3px;
	background: #fff;
	color: #222;
}

.combo select {
	flex: 1;
	min-width: 0;
	padding: 0;
	border: 0;
	background: none;
	color: inherit;
	font: inherit;
	font-size: 10px;
	appearance: none;
}

.combo-layer {
	width: 254px;
}

.layer-flags {
	width: 80px;
	height: 16px;
}

.combo-color {
	width: 126px;
}

.combo-linetype {
	width: 135px;
}

.combo-weight {
	width: 106px;
}

.combo-plot {
	width: 101px;
	padding-left: 8px;
	color: #8b8b8b;
}

.combo-plot select:disabled {
	opacity: 1;
}

.swatch {
	width: 11px;
	height: 11px;
	margin-right: 2px;
	border: 1px solid #222;
}

.line {
	width: 52px;
	height: 1px;
	margin: 0 4px 0 1px;
	background: #111;
}

.combo-weight .line {
	width: 30px;
}

.chevron {
	width: 8px;
	height: 6px;
}

.chevron path {
	fill: none;
	stroke: #777;
}

.combo-plot .chevron {
	opacity: .4;
}

/* drawing area */

.workspace {
	display: flex;
	flex: 1;
	min-height: 0;
}

.canvas {
	position: relative;
	flex: 1;
	overflow: hidden;
	background: #898989;
}

.crosshair {
	position: absolute;
	top: 0;
	left: 0;
	width: 104px;
	height: 106px;
}

.sheet {
	position: absolute;
	top: 72px;
	left: 222px;
	width: 665px;
	height: 470px;
}

.ucs {
	position: absolute;
	bottom: 9px;
	left: 10px;
	width: 44px;
	height: 76px;
}

.navbar {
	position: absolute;
	top: 2px;
	right: 1px;
	width: 28px;
	border: 1px solid #777;
	background: #a0a0a0;
}

.cad-text {
	fill: #c01414;
	font-family: "Liberation Sans", "DejaVu Sans", sans-serif;
	font-size: 7px;
}

/* solids toolbar */

.solids {
	flex: none;
	width: 28px;
	padding: 0 5px 0 2px;
	border-left: 1px solid #3a4352;
	background: #3a4352;
	overflow: hidden;
}

.solids-list {
	display: flex;
	flex-direction: column;
	align-items: center;
	height: calc(100% + 8px);
	border: 1px solid #2a323e;
	background: #343d4b;
}

.solid {
	display: flex;
	flex: 1;
	align-items: center;
	min-height: 0;
}

.solid svg {
	width: 16px;
	height: 16px;
}

.rule {
	width: 18px;
	height: 1px;
	margin: 1px 0;
	background: #d5d8dc;
}

.grip-h {
	width: 14px;
	height: 4px;
	margin: 3px 0 1px;
	background: radial-gradient(circle, #d5d9de 1px, transparent 1px) 0 0 / 3px 3px;
}

.grip-h.second {
	margin: 5px 0 2px;
}

.edge {
	flex: none;
	width: 6px;
	margin-top: 22px;
	background: #efeff1;
}

/* command line */

.command {
	display: flex;
	flex: none;
	height: 54px;
	border-top: 3px solid #3a4352;
	border-bottom: 1px solid #3a4352;
}

.command-side {
	display: flex;
	flex-direction: column;
	align-items: center;
	gap: 8px;
	width: 20px;
	padding-top: 4px;
	background: #2e3642;
}

.command-side svg {
	width: 12px;
	height: 12px;
}

.dots {
	width: 15px;
	height: 1px;
	background: repeating-linear-gradient(90deg, #aaa 0 1px, transparent 1px 3px);
}

.command-body {
	flex: 1;
	background: #fff;
	color: #111;
	font-family: "DejaVu Sans Mono", monospace;
	font-size: 10px;
}

.history {
	height: 33px;
	padding: 5px 2px 0;
	background: #c8c8c8;
}

.history p {
	margin: 0;
	line-height: 13px;
}

.prompt {
	display: flex;
	align-items: center;
	height: 17px;
	padding-left: 4px;
}

.prompt-icon {
	width: 14px;
	height: 11px;
	margin-right: 2px;
}

.prompt-caret {
	width: 6px;
	height: 4px;
	margin-right: 5px;
}

.prompt input {
	flex: 1;
	padding: 0;
	border: 0;
	outline: 0;
	font: inherit;
}

.prompt input::placeholder {
	color: #777;
	font-style: italic;
}

.command-end {
	width: 8px;
	border-left: 2px solid #3a4352;
	border-bottom: 3px solid #3a4352;
	background: #efeff1;
}

/* layout tabs */

.layout-tabs {
	display: flex;
	flex: none;
	height: 18px;
	padding-left: 10px;
}

.layout-tab {
	height: 16px;
	padding: 0 9px;
	background: #2c3440;
	font-size: 10px;
	line-height: 18px;
	clip-path: polygon(0 0, 100% 0, calc(100% - 3px) 70%, calc(100% - 8px) 100%, 8px 100%, 3px 70%);
}

.layout-tab.active {
	background: #3a4352;
	color: #fff;
	font-weight: bold;
}

.add-layout {
	display: flex;
	align-items: center;
	justify-content: center;
	width: 20px;
	height: 15px;
	margin-left: 2px;
	border-radius: 0 0 6px 6px;
	background: #2f3744;
}

/* status bar */

.status {
	display: flex;
	flex: none;
	justify-content: flex-end;
	gap: 1px;
	height: 21px;
	padding: 1px 3px 0 0;
}

.status button {
	display: flex;
	align-items: center;
	justify-content: center;
	width: 20px;
	height: 20px;
	background: #333c4a;
}

.status .space {
	width: 36px;
	margin-right: 2px;
	color: #fff;
	font-size: 10px;
	font-weight: bold;
}

.status svg {
	width: 16px;
	height: 16px;
}

.status-group {
	display: flex;
}

.status-group button {
	width: 22px;
}

.status .caret {
	width: 12px;
}

.status .caret svg {
	width: 6px;
	height: 4px;
}

.status .on {
	background: #4580bd;
}
```
FILE: plan.js
```
var NS = "http://www.w3.org/2000/svg";

function add(parent, name, attrs) {
	var el = document.createElementNS(NS, name);
	for (var key in attrs) {
		el.setAttribute(key, attrs[key]);
	}
	document.getElementById(parent).appendChild(el);
}

function stamp(parent, id, x, y, angle) {
	add(parent, "use", {
		href: "#" + id,
		transform: "translate(" + x + " " + y + ")" + (angle ? " rotate(" + angle + ")" : "")
	});
}

function box(parent, x, y, w, h, fill) {
	add(parent, "rect", { x: x, y: y, width: w, height: h, fill: fill });
}

// sheet frame
[249, 287, 324, 362, 401, 440, 479, 518, 557, 594, 629, 664, 700, 735, 770, 806, 841].forEach(function (x) {
	box("frame-ticks", x - 1, 123, x > 560 ? 4 : 2, 5, "#e00808");
	box("frame-ticks", x - 1, 578, x > 560 ? 4 : 2, 5, "#e00808");
	box("frame-ticks", x + 18, 123, 1, 4, "#8d0808");
	box("frame-ticks", x + 18, 579, 1, 4, "#8d0808");
});
[161, 201, 241, 281, 321, 361, 401, 440, 481, 520, 559].forEach(function (y) {
	box("frame-ticks", 227, y - 1, 4, 3, "#e00808");
	box("frame-ticks", 877, y - 1, 4, 3, "#e00808");
	box("frame-ticks", 227, y + 20, 5, 1, "#8d0808");
	box("frame-ticks", 878, y + 20, 4, 1, "#8d0808");
});

// grid bubbles
[257, 287, 309, 320, 331, 362, 371, 424, 480, 517, 544, 591, 647, 679, 731, 765, 783, 821, 848].forEach(function (x) {
	box("grid", x, 163, 1, 9, "#a09a5c");
	box("grid", x, 173, 1, 11, "#6b6638");
	stamp("grid", "bubble", x, 159);
});
[211, 239, 290, 350, 371, 392, 429].forEach(function (y) {
	box("grid", 860, y, 4, 1, "#b09a30");
	stamp("grid", "bubble", 867, y);
});
[271, 298, 315, 323, 344, 363, 395, 452, 498, 530, 568, 618, 663, 705, 748, 774, 802, 834].forEach(function (x) {
	box("grid", x - 2, 176, 4, 3, "#e00808");
});
box("grid", 549, 172, 6, 3, "#e00808");
[225, 264, 321, 337, 361, 380, 410].forEach(function (y) {
	box("grid", 853, y - 2, 3, 4, "#d00808");
});

// parking bays
var fours = [602, 614, 626, 638, 655, 667, 687, 699, 711, 723];
[403, 416, 435, 447, 459, 471, 487, 500, 512, 524, 536, 656, 667, 687, 699, 711, 723, 740, 752, 793].forEach(function (x) {
	stamp("cars", "car", x, 227);
});
[435, 447, 459, 471, 488, 501, 514, 556, 569, 582, 740, 752].concat(fours).forEach(function (x) {
	stamp("cars", "car", x, 288, 180);
});
[433, 445, 457, 469].concat(fours).forEach(function (x) {
	stamp("cars", "car", x, 352, 180);
});
[445, 457, 556, 569, 582].concat(fours).forEach(function (x) {
	stamp("cars", "car", x, 379);
});
[247, 259, 271, 283, 315, 328, 341, 359, 372, 385, 400, 413].forEach(function (y) {
	stamp("cars", "car", 380, y, -90);
});
[247, 259, 271, 283, 300, 312, 324, 336, 359, 371, 383, 400, 413].forEach(function (y) {
	stamp("cars", "car", 833, y, 90);
});

// structural columns
function column(x, y) {
	box("columns", x - 2, y - 2, 5, 5, "#1fd01f");
}
[211, 239, 429].forEach(function (y) {
	[364, 424, 480, 544, 591, 647, 679, 731, 783, 821, 848].forEach(function (x) {
		if (!(y === 239 && x === 783)) {
			column(x, y);
		}
	});
});
[290, 350, 392].forEach(function (y) {
	[366, 424, 480, 544, 591, 647, 679, 731, 783, 821, 848].forEach(function (x) {
		column(x, y);
	});
});
[[287, 275], [320, 275], [362, 275], [308, 239], [257, 335], [320, 335], [362, 335], [320, 392], [257, 392],
	[257, 429], [320, 429], [480, 371], [516, 350], [516, 371], [765, 350], [765, 392]].forEach(function (p) {
	column(p[0], p[1]);
});

// axis heads and flow markers
[355.5, 617.5, 756.5].forEach(function (x) {
	stamp("labels", "axis", x, 169);
	stamp("labels", "axis", x, 443);
});
[304.5, 382.5].forEach(function (y) {
	stamp("labels", "axis", 246, y);
	stamp("labels", "axis", 864, y);
});
[[495, 258], [624, 258], [745, 258], [455, 319], [624, 324], [745, 324], [495, 410], [624, 410], [745, 410]].forEach(function (p) {
	stamp("labels", "flow", p[0], p[1]);
});
[[408, 288], [802, 290], [408, 368], [802, 367]].forEach(function (p) {
	stamp("labels", "flow", p[0], p[1], 90);
});

// room tags
[[446, 249], [568, 249], [692, 248], [791, 248], [380, 223], [446, 310], [692, 316], [302, 290], [336, 292], [358, 282],
	[350, 335], [302, 346], [332, 346], [445, 415], [570, 415], [692, 415], [790, 415], [530, 376], [775, 355]].forEach(function (p) {
	stamp("labels", "tag-red", p[0], p[1]);
});
[[340, 252], [638, 226], [755, 367], [832, 229], [596, 317], [354, 214], [775, 382]].forEach(function (p) {
	stamp("labels", "tag", p[0], p[1]);
});

// title block text, drawn as bars: x, y, width, height
[[236, 539, 4, 8], [249, 546, 39, 3], [252, 557, 36, 4], [262, 566, 21, 4], [297, 548, 12, 4], [238, 567, 6, 3], [245, 574, 10, 2],
	[237, 554, 6, 3], [324, 547, 35, 4], [353, 541, 6, 7], [323, 550, 4, 5], [318, 555, 13, 3], [343, 555, 9, 4], [328, 561, 20, 3],
	[323, 571, 26, 3], [352, 565, 6, 7], [364, 542, 8, 2], [376, 542, 6, 2], [401, 542, 17, 2], [379, 549, 14, 2], [357, 549, 7, 3],
	[313, 557, 8, 2], [313, 562, 7, 2], [313, 566, 6, 2], [358, 562, 6, 3], [234, 573, 8, 2], [806, 541, 11, 3], [819, 543, 7, 3],
	[819, 550, 7, 3], [819, 558, 7, 3], [819, 565, 7, 3], [819, 572, 7, 3], [831, 543, 11, 3], [831, 551, 9, 3], [834, 558, 6, 4],
	[833, 565, 11, 4], [831, 572, 9, 3], [858, 544, 14, 3], [866, 559, 8, 3], [874, 542, 4, 3]].forEach(function (b) {
	add("title-block", "path", {
		d: "M" + b[0] + " " + (b[1] + b[3] / 2) + "h" + b[2],
		stroke: "#e60909",
		"stroke-width": b[3],
		"stroke-dasharray": "7 1"
	});
});
[[659, 543, 14], [646, 550, 30], [653, 557, 20], [643, 563, 32], [630, 570, 52], [687, 542, 16]].forEach(function (b) {
	box("title-block", b[0], b[1], b[2], 4, "#fff");
	box("title-block", b[0], b[1] + 3, 5, 3, "#fff");
	box("title-block", b[0] + 9, b[1], 1, 4, "#333");
});
box("title-block", 626, 572, 5, 5, "#fff");
box("title-block", 653, 555, 4, 9, "#fff");
box("title-block", 804, 547, 8, 4, "#fff");
[543, 550, 557, 563, 570].forEach(function (y, i) {
	box("title-block", 673, y, 11, 5, i ? "#8d5238" : "#55504d");
	box("title-block", 728 - i % 2 * 5, y, 11 + i % 2 * 6, 4, "#86f5f5");
	box("title-block", 754 + i % 3 * 2, y, 10 + i % 2 * 8, 4, "#86f5f5");
	[738, 767, 793].forEach(function (x) {
		box("title-block", x, y, 9, 4, "#5b0f0f");
		box("title-block", x + 1, y + 1, 2, 2, "#fff");
		box("title-block", x + 5, y + 1, 3, 2, "#fff");
	});
});
[[710, 551, 8, 5], [711, 564, 9, 5], [721, 550, 6, 12], [722, 564, 6, 12], [748, 555, 8, 6], [752, 562, 6, 14],
	[757, 545, 6, 9], [785, 543, 10, 3], [777, 557, 14, 5], [784, 563, 12, 3], [787, 569, 4, 7]].forEach(function (b) {
	box("title-block", b[0], b[1], b[2], b[3], "#86f5f5");
});
```
